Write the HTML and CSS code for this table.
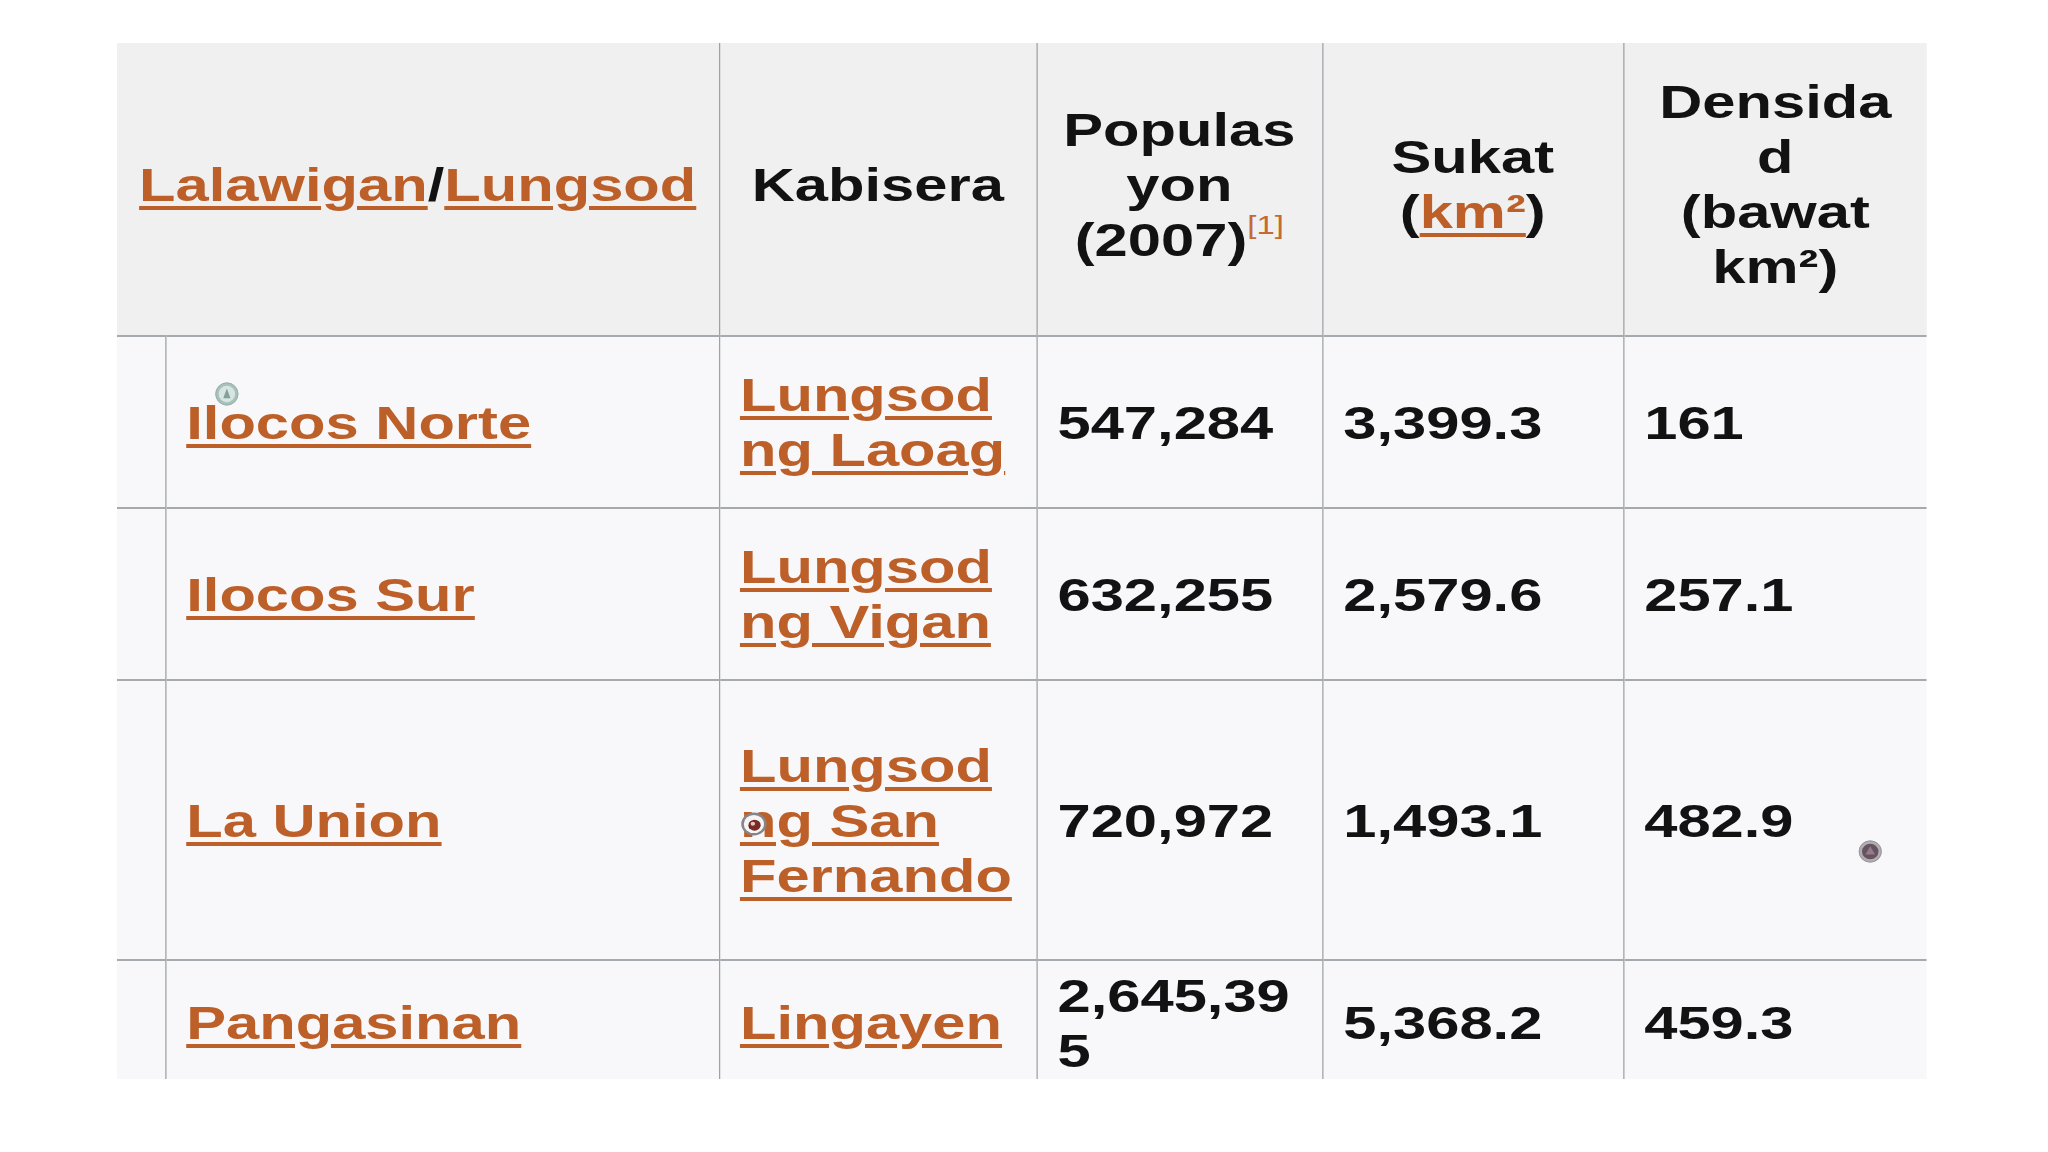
FILE: index.html
```html
<!DOCTYPE html>
<html lang="tl">
<head>
<meta charset="utf-8">
<title>Mga lalawigan</title>
<link rel="stylesheet" href="styles.css">
</head>
<body>
<div class="page">
  <div class="stretch">
    <table class="geo">
      <colgroup>
        <col class="c-mark">
        <col class="c-name">
        <col class="c-cap">
        <col class="c-pop">
        <col class="c-area">
        <col class="c-dens">
      </colgroup>
      <thead>
        <tr class="r-head">
          <th colspan="2"><a href="#">Lalawigan</a>/<a href="#">Lungsod</a></th>
          <th>Kabisera</th>
          <th class="brk">Populasyon (2007)<sup class="ref"><a href="#">[1]</a></sup></th>
          <th class="brk">Sukat (<a href="#">km²</a>)</th>
          <th class="brk th-dens">Densidad (bawat km²)</th>
        </tr>
      </thead>
      <tbody>
        <tr class="r-1">
          <td class="mark"></td>
          <td class="name">
            <span class="seal seal-green">
              <svg viewBox="0 0 20 20" width="19" height="24" preserveAspectRatio="none"><circle cx="10" cy="10" r="9.5" fill="#9cb8b1"/><circle cx="10" cy="10" r="6.8" fill="#d3e3dd"/><path d="M7 13.5 L10 5.5 L13 13.5 Z" fill="#6c9188"/><circle cx="10" cy="10" r="9.2" fill="none" stroke="#86a39b" stroke-width="0.8"/></svg>
            </span>
            <a href="#">Ilocos Norte</a>
          </td>
          <td class="cap"><a href="#">Lungsod ng Laoag</a></td>
          <td class="brk">547,284</td>
          <td>3,399.3</td>
          <td>161</td>
        </tr>
        <tr class="r-2">
          <td class="mark"></td>
          <td class="name"><a href="#">Ilocos Sur</a></td>
          <td class="cap"><a href="#">Lungsod ng Vigan</a></td>
          <td class="brk">632,255</td>
          <td>2,579.6</td>
          <td>257.1</td>
        </tr>
        <tr class="r-3">
          <td class="mark"></td>
          <td class="name"><a href="#">La Union</a></td>
          <td class="cap">
            <span class="seal seal-red">
              <svg viewBox="0 0 20 20" width="21" height="24" preserveAspectRatio="none"><circle cx="10" cy="10" r="9.5" fill="#858587"/><circle cx="10" cy="10" r="7.6" fill="#f5f5f5"/><circle cx="10.5" cy="11" r="4.6" fill="#7a2a24"/><circle cx="9.2" cy="9.8" r="1.7" fill="#e3c4bc"/><path d="M6 11 L8 13.5 L6.5 14 Z" fill="#333"/></svg>
            </span>
            <a href="#">Lungsod ng San Fernando</a>
          </td>
          <td class="brk">720,972</td>
          <td>1,493.1</td>
          <td class="dens-seal">482.9
            <span class="seal seal-dark">
              <svg viewBox="0 0 20 20" width="19" height="23" preserveAspectRatio="none"><circle cx="10" cy="10" r="9.5" fill="#aaa7ab"/><circle cx="10" cy="10" r="6.8" fill="#574252"/><path d="M6 12.5 L10 5.5 L14 12.5 Z" fill="#8b6f80"/><circle cx="10" cy="10" r="9.2" fill="none" stroke="#8f8b90" stroke-width="0.8"/></svg>
            </span>
          </td>
        </tr>
        <tr class="r-4">
          <td class="mark"></td>
          <td class="name"><a href="#">Pangasinan</a></td>
          <td class="cap"><a href="#">Lingayen</a></td>
          <td class="brk">2,645,395</td>
          <td>5,368.2</td>
          <td>459.3</td>
        </tr>
      </tbody>
    </table>
  </div>
</div>
</body>
</html>
```

FILE: styles.css
```css
html, body {
  margin: 0;
  background: #ffffff;
}

.page {
  padding: 43px 0 0 117px;
}

/* the screenshot shows the table stretched horizontally */
.stretch {
  width: 1425px;
  height: 1036px;
  overflow: hidden;
  transform: scaleX(1.27);
  transform-origin: 0 0;
}

.geo {
  width: 1425px;
  table-layout: fixed;
  border-collapse: collapse;
  font-family: "Liberation Sans", Arial, sans-serif;
  font-weight: 700;
  font-size: 47px;
  line-height: 55px;
  color: #121212;
  background: #f8f8fa;
}

.c-mark { width: 38px; }
.c-name { width: 436px; }
.c-cap  { width: 250px; }
.c-pop  { width: 225px; }
.c-area { width: 237px; }
.c-dens { width: 239px; }

.geo th,
.geo td {
  border-left: 1px solid #9ea2a7;
  border-top: 2px solid #a6a9ad;
  vertical-align: middle;
}

.geo tr > :first-child {
  border-left: none;
}

.geo thead th {
  border-top: none;
  background: #f0f0f1;
  text-align: center;
  padding: 0 16px 10px;
}

.geo thead th.th-dens {
  padding: 0 26px 10px;
}

.geo td {
  padding: 0 12px 0 16px;
  text-align: left;
}

.geo td.mark {
  padding: 0;
}

.brk {
  overflow-wrap: anywhere;
}

.r-head { height: 293px; }
.r-1 { height: 172px; }
.r-2 { height: 172px; }
.r-3 { height: 280px; }
.r-4 { height: 124px; }

.geo a {
  color: #bd5f28;
  text-decoration: underline;
  text-decoration-thickness: 4px;
  text-underline-offset: 5px;
}

.ref {
  font-size: 26px;
  font-weight: 400;
  line-height: 0;
  vertical-align: 22px;
}

.ref a {
  text-decoration: none;
  color: #c46a35;
}

.name,
.cap,
.dens-seal {
  position: relative;
}

.seal {
  position: absolute;
  display: block;
  line-height: 0;
}

.seal svg {
  display: block;
}

.seal-green {
  left: 38px;
  top: 45px;
  opacity: 0.85;
}

.seal-red {
  left: 16px;
  top: 131px;
}

.seal-dark {
  left: 184px;
  top: 159px;
  opacity: 0.9;
}
```
